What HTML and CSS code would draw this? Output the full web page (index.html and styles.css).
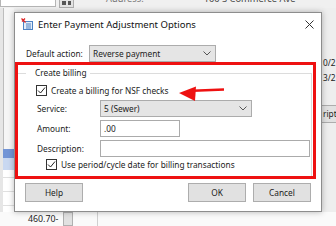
FILE: index.html
```html
<!DOCTYPE html>
<html>
<head>
<meta charset="utf-8">
<link rel="stylesheet" href="styles.css">
</head>
<body>
<div class="app">
  <div class="app-top">
    <div class="tb"></div>
    <div class="tbtn"><span></span><span></span></div>
    <span class="bg-text addr">Address:</span>
    <span class="bg-text street">100 S Commerce Ave</span>
  </div>
  <div class="app-left">
    <div class="left-gray"></div>
    <div class="left-sel"></div>
    <div class="left-sel2"></div>
    <div class="left-rows"><div></div><div></div><div></div></div>
  </div>
  <div class="app-mid"></div>
  <div class="app-right">
    <span class="rt">0/2</span>
    <span class="rt">3/2</span>
    <div class="rbtn">ripti</div>
  </div>
  <div class="app-bottom">
    <span class="amt">460.70-</span>
    <div class="sbtn"></div>
    <div class="vline"></div>
  </div>
</div>

<div class="dialog">
  <div class="titlebar">
    <svg class="ticon" width="12" height="12" viewBox="0 0 12 12">
      <rect x="2.5" y="3.5" width="9" height="8" fill="#e3edf9" stroke="#4d82c4"/>
      <line x1="5" y1="6" x2="10" y2="6" stroke="#4d82c4"/>
      <line x1="5" y1="8" x2="10" y2="8" stroke="#4d82c4"/>
      <line x1="5" y1="10" x2="10" y2="10" stroke="#4d82c4"/>
      <path d="M0.5 0.5 L4.5 4.5 M4 0.5 L1 3.5" stroke="#d22" stroke-width="1.3" fill="none"/>
    </svg>
    <span class="title">Enter Payment Adjustment Options</span>
    <svg class="close" width="9" height="9" viewBox="0 0 9 9">
      <path d="M0.5 0.5 L8.5 8.5 M8.5 0.5 L0.5 8.5" stroke="#333" stroke-width="1" fill="none"/>
    </svg>
  </div>
  <div class="dbody">
    <div class="row-top">
      <span class="lbl-top">Default action:</span>
      <div class="combo combo-action"><span>Reverse payment</span>
        <svg class="chev" width="8" height="5" viewBox="0 0 8 5"><path d="M0.5 0.5 L4 4 L7.5 0.5" stroke="#555" fill="none"/></svg>
      </div>
    </div>
    <fieldset class="group">
      <legend>Create billing</legend>
      <label class="check cb1">
        <span class="box"><svg width="9" height="9" viewBox="0 0 9 9"><path d="M1 4.5 L3.5 7 L8 1.5" stroke="#222" stroke-width="1" fill="none"/></svg></span>
        <span>Create a billing for NSF checks</span>
      </label>
      <div class="form">
        <span class="lbl">Service:</span>
        <div class="combo combo-svc"><span>5 (Sewer)</span>
          <svg class="chev" width="8" height="5" viewBox="0 0 8 5"><path d="M0.5 0.5 L4 4 L7.5 0.5" stroke="#555" fill="none"/></svg>
        </div>
        <span class="lbl">Amount:</span>
        <div class="input input-amt">.00</div>
        <span class="lbl">Description:</span>
        <div class="input input-desc"></div>
      </div>
      <label class="check cb2">
        <span class="box"><svg width="9" height="9" viewBox="0 0 9 9"><path d="M1 4.5 L3.5 7 L8 1.5" stroke="#222" stroke-width="1" fill="none"/></svg></span>
        <span>Use period/cycle date for billing transactions</span>
      </label>
    </fieldset>
    <div class="buttons">
      <div class="btn">Help</div>
      <div class="spacer"></div>
      <div class="btn">OK</div>
      <div class="btn">Cancel</div>
    </div>
  </div>
</div>

<div class="annot-box"></div>
<svg class="annot-arrow" width="50" height="20" viewBox="0 0 50 20">
  <path d="M47 5.5 L16 6.8" stroke="#ee1111" stroke-width="2.6" fill="none"/>
  <polygon points="2,9 19,2.5 18,17" fill="#ee1111"/>
</svg>
</body>
</html>
```

FILE: styles.css
```css
* { box-sizing: border-box; }

body {
  margin: 0;
  width: 336px;
  height: 226px;
  overflow: hidden;
  position: relative;
  font-family: "Noto Sans", "Open Sans", sans-serif;
  font-size: 8.3px;
  color: #1c1c1c;
  background: #f0f0f0;
}

/* background application window */
.app {
  width: 336px;
  height: 226px;
  display: grid;
  grid-template-columns: 14px 1fr 14px;
  grid-template-rows: 8px 1fr 14px;
}

.app-top {
  grid-column: 1 / 4;
  display: flex;
  align-items: flex-start;
  overflow: hidden;
}

.tb {
  width: 56px;
  height: 7px;
  background: #fff;
  border: 1px solid #b5b5b5;
  border-top: none;
}

.tbtn {
  margin-left: 3px;
  width: 15px;
  height: 8px;
  background: #e3e3e3;
  border: 1px solid #adadad;
  border-top: none;
  display: flex;
  gap: 2px;
  padding: 1px 2px;
}

.tbtn span {
  width: 4px;
  height: 4px;
  background: #555;
}

.bg-text {
  color: #444;
  font-size: 9.3px;
  line-height: 12px;
  margin-top: -7px;
  white-space: nowrap;
}

.addr { margin-left: 32px; color: #777; }
.street { margin-left: 60px; }

.app-left {
  grid-row: 2 / 3;
  display: flex;
  flex-direction: column;
  border-left: 3px solid #e6e6e6;
}

.left-gray {
  flex: 1;
  background: #f6f6f6;
  border-left: 1px solid #bdbdbd;
}

.left-sel { height: 9px; background: #7395d6; }
.left-sel2 { height: 12px; background: #c9d8f1; }

.left-rows {
  height: 42px;
  background: #fff;
  display: flex;
  flex-direction: column;
  justify-content: space-around;
}

.left-rows div { height: 1px; background: #e0e0e0; }

.app-mid { grid-row: 2 / 3; }

.app-right {
  grid-row: 2 / 3;
  display: flex;
  flex-direction: column;
  padding-top: 50px;
  overflow: hidden;
  background: #eeeeee;
}

.rt {
  line-height: 9px;
  height: 9px;
  margin-bottom: 6px;
  padding-left: 1px;
  white-space: nowrap;
}

.rbtn {
  margin-top: 17px;
  height: 18px;
  background: #e1e1e1;
  border-top: 1px solid #adadad;
  border-bottom: 1px solid #adadad;
  line-height: 16px;
  padding-left: 1px;
  white-space: nowrap;
}

.app-bottom {
  grid-column: 1 / 4;
  display: flex;
  align-items: center;
  background: #fafafa;
}

.amt { margin-left: 28px; line-height: 14px; font-size: 8.8px; }

.sbtn {
  margin-left: 5px;
  width: 10px;
  height: 14px;
  background: #e1e1e1;
  border: 1px solid #b0b0b0;
}

.vline {
  margin-left: 24px;
  width: 1px;
  height: 14px;
  background: #d0d0d0;
}

/* dialog */
.dialog {
  position: absolute;
  left: 14px;
  top: 12px;
  width: 308px;
  border: 1px solid #8d8d8d;
  background: #fff;
  box-shadow: 0 0 6px rgba(0, 0, 0, 0.28);
}

.titlebar {
  height: 22px;
  display: flex;
  align-items: center;
  padding-left: 6px;
  padding-right: 7px;
}

.ticon { margin-right: 5px; flex: none; }

.title { font-size: 9.5px; color: #111; white-space: nowrap; }

.close { margin-left: auto; }

.dbody {
  padding: 10px 10px 9px 10px;
}

.row-top {
  display: flex;
  align-items: center;
  height: 17px;
}

.lbl-top {
  width: 64px;
  padding-left: 1px;
  white-space: nowrap;
}

.combo {
  height: 17px;
  background: #e5e5e5;
  border: 1px solid #acacac;
  display: flex;
  align-items: center;
  justify-content: space-between;
  padding: 0 4px 0 3px;
  white-space: nowrap;
}

.combo-action { width: 127px; }
.combo-svc { width: 152px; }

.chev { flex: none; }

.group {
  margin: 5px -1px 0 -8px;
  border: 1px solid #dcdcdc;
  padding: 5px 0 6px 19px;
  min-width: 0;
}

.group legend {
  padding: 0 3px 0 9px;
  margin-left: -11px;
  line-height: 12px;
  background: #fff;
}

.check {
  display: flex;
  align-items: center;
  gap: 4px;
  height: 12px;
  white-space: nowrap;
}

.cb1 { margin-left: -1px; margin-bottom: 4px; }
.cb2 { margin-left: 9px; margin-top: 1px; }

.box {
  width: 11px;
  height: 11px;
  border: 1px solid #333;
  background: #fff;
  display: flex;
  align-items: center;
  justify-content: center;
  flex: none;
}

.form {
  display: grid;
  grid-template-columns: 63px auto;
  grid-auto-rows: 17px;
  row-gap: 3px;
  align-items: center;
  justify-items: start;
}

.input {
  height: 17px;
  background: #fff;
  border: 1px solid #ababab;
  padding-left: 3px;
  line-height: 15px;
}

.input-amt { width: 80px; }
.input-desc { width: 210px; }

.buttons {
  display: flex;
  gap: 7px;
  margin-top: 6px;
}

.spacer { flex: 1; }

.btn {
  width: 58px;
  height: 19px;
  background: #e1e1e1;
  border: 1px solid #adadad;
  display: flex;
  align-items: center;
  justify-content: center;
}

/* annotation overlay */
.annot-box {
  position: absolute;
  left: 15px;
  top: 62px;
  width: 301px;
  height: 117px;
  border: 3px solid #ee1111;
}

.annot-arrow {
  position: absolute;
  left: 177px;
  top: 84px;
}
```
